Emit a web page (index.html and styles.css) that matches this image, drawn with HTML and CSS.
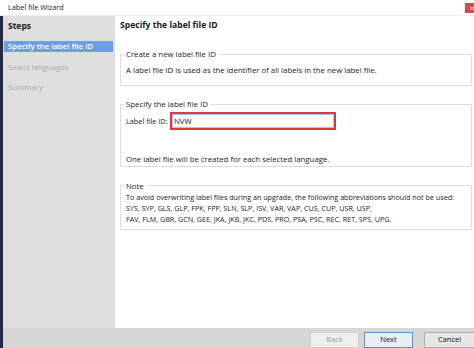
FILE: index.html
```html
<html>
  <head>
    <title>Label file Wizard</title>
    <link rel="stylesheet" href="styles.css">
  </head>
  <body>
    <div class="window">
      <div class="titlebar">
        <span class="title">Label file Wizard</span>
        <span class="closebtn">&#215;</span>
      </div>
      <div class="frame">
        <div class="stripe"></div>
        <div class="frame-body">
          <div class="main">
            <div class="steps">
              <div class="steps-head">Steps</div>
              <div class="step current">Specify the label file ID</div>
              <div class="step">Select languages</div>
              <div class="step">Summary</div>
            </div>
            <div class="content">
              <div class="page-head">Specify the label file ID</div>

              <div class="group group-create">
                <span class="legend">Create a new label file ID</span>
                <div class="text">A label file ID is used as the identifier of all labels in the new label file.</div>
              </div>

              <div class="group group-id">
                <span class="legend">Specify the label file ID</span>
                <div class="field-row">
                  <span class="field-label">Label file ID:</span>
                  <span class="field-box"><span class="field-input">NVW</span></span>
                </div>
                <div class="text id-hint">One label file will be created for each selected language.</div>
              </div>

              <div class="group group-note">
                <span class="legend">Note</span>
                <div class="text note-text">To avoid overwriting label files during an upgrade, the following abbreviations should not be used:</div>
                <div class="text note-text">SYS, SYP, GLS, GLP, FPK, FPP, SLN, SLP, ISV, VAR, VAP, CUS, CUP, USR, USP,</div>
                <div class="text note-text">FAV, FLM, GBR, GCN, GEE, JKA, JKB, JKC, PDS, PRO, PSA, PSC, REC, RET, SPS, UPG.</div>
              </div>
            </div>
          </div>
          <div class="buttonbar">
            <span class="btn disabled">Back</span>
            <span class="btn default">Next</span>
            <span class="btn cancel">Cancel</span>
          </div>
        </div>
      </div>
    </div>
  </body>
</html>
```

FILE: styles.css
```css
body {
  margin: 0px;
  padding: 0px;
  background: #ffffff;
  font-family: "Open Sans", "Noto Sans", sans-serif;
  color: #1a1a1a;
}

.window {
  width: 474px;
  height: 348px;
  overflow: hidden;
  display: flex;
  flex-direction: column;
}

.titlebar {
  height: 15px;
  flex: none;
  display: flex;
  justify-content: space-between;
  align-items: flex-start;
  border-bottom: 1px solid #eeeeee;
}
.title { font-size: 7.3px; padding: 2px 0 0 8px; color: #222; }
.closebtn {
  width: 9px;
  height: 10px;
  margin-top: 3px;
  background: #c8504f;
  color: #fff;
  font-size: 8px;
  line-height: 10px;
  text-align: right;
  overflow: hidden;
}

.frame { flex: 1; display: flex; min-height: 0; }
.stripe { width: 3px; background: #1f2b4a; flex: none; }
.frame-body { flex: 1; display: flex; flex-direction: column; min-width: 0; }

.main { flex: 1; display: flex; min-width: 0; }

.steps {
  width: 112px;
  flex: none;
  background: #dfdfdf;
  padding: 4px 2px 0 1px;
  box-sizing: border-box;
}
.steps-head { font-size: 8.5px; font-weight: bold; padding: 0 0 0 4px; height: 21px; }
.step { font-size: 7.8px; color: #a9a9a9; height: 11px; line-height: 11px; padding-left: 4px; margin-bottom: 9px; }
.step.current { background: #6e9ee4; color: #ffffff; font-weight: 600; margin-bottom: 10px; }

.content {
  flex: 1;
  min-width: 0;
  padding: 3px 2px 0 5px;
}
.page-head { font-size: 8.6px; font-weight: bold; height: 35px; }

.group {
  border: 1px solid #dcdcdc;
  box-sizing: border-box;
  padding: 0 4px 0 5px;
  font-size: 7.8px;
  color: #222;
}
.legend {
  display: inline-block;
  vertical-align: top;
  margin-top: -6px;
  margin-left: -2px;
  padding: 0 2px;
  line-height: 11px;
  height: 11px;
  background: #ffffff;
}
.text { line-height: 11px; white-space: nowrap; overflow: hidden; }

.group-create { height: 32px; margin-bottom: 18px; }
.group-create .text { margin-top: 5px; }

.group-id { height: 63px; margin-bottom: 18px; }
.field-row { display: flex; align-items: center; margin-top: 2px; height: 18px; }
.field-label { width: 44px; flex: none; white-space: nowrap; font-size: 7.3px; }
.field-box {
  width: 162px;
  height: 14px;
  border: 2px solid #e0393b;
  display: flex;
}
.field-input {
  flex: 1;
  border: 1px solid #a9c6e8;
  padding-left: 1px;
  line-height: 12px;
  color: #111;
}
.id-hint { margin-top: 24px; }

.group-note { height: 45px; padding-top: 1px; }
.note-text { font-size: 7.2px; }

.buttonbar {
  height: 16px;
  flex: none;
  background: #d6d6d6;
  display: flex;
  justify-content: flex-end;
  align-items: flex-start;
  padding-top: 4px;
  gap: 5px;
}
.btn {
  width: 47px;
  height: 14px;
  border: 1px solid #adadad;
  background: #e6e6e6;
  font-size: 7.5px;
  text-align: center;
  line-height: 13px;
  color: #111;
}
.btn.disabled { color: #a0a0a0; background: #efefef; border-color: #cfcfcf; }
.btn.default { border-color: #5a8fd0; background: #e8eef6; }
.btn.cancel { margin-left: 6px; width: 49px; border-right: none; }
```
